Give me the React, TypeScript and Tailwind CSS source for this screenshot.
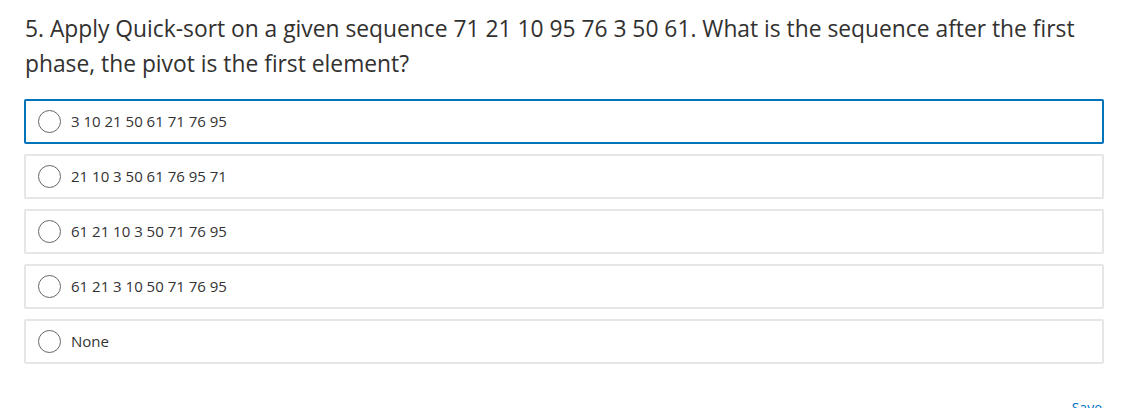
const options = [
  '3 10 21 50 61 71 76 95',
  '21 10 3 50 61 76 95 71',
  '61 21 10 3 50 71 76 95',
  '61 21 3 10 50 71 76 95',
  'None',
];

export default function App() {
  return (
    <div className="h-[408px] w-[1141px] overflow-hidden bg-white font-['Open_Sans',sans-serif] text-[#333]">
      <div className="ml-[24px] w-[1080px] pt-[11px]">
        <h2 className="pl-[1px] text-[22.8px] leading-[35px] font-normal whitespace-nowrap text-[#323130]">
          5. Apply Quick-sort on a given sequence 71 21 10 95 76 3 50 61. What is the sequence after the first
          <br />
          phase, the pivot is the first element?
        </h2>
        <div className="mt-[18px] flex flex-col gap-[10px]">
          {options.map((opt, i) => (
            <label
              key={opt}
              className={`flex h-[45px] items-center rounded-[2px] border-2 pl-[12px] ${
                i === 0 ? 'border-[#0173b8]' : 'border-[#e6e6e6]'
              }`}
            >
              <span className="h-[23px] w-[23px] shrink-0 rounded-full border border-[#666]" />
              <span className="ml-[10px] text-[15px] text-[#333]">{opt}</span>
            </label>
          ))}
        </div>
        <div className="mt-[33px] flex justify-end pr-[2px]">
          <span className="text-[14px] text-[#0172c6]">Save</span>
        </div>
      </div>
    </div>
  );
}
